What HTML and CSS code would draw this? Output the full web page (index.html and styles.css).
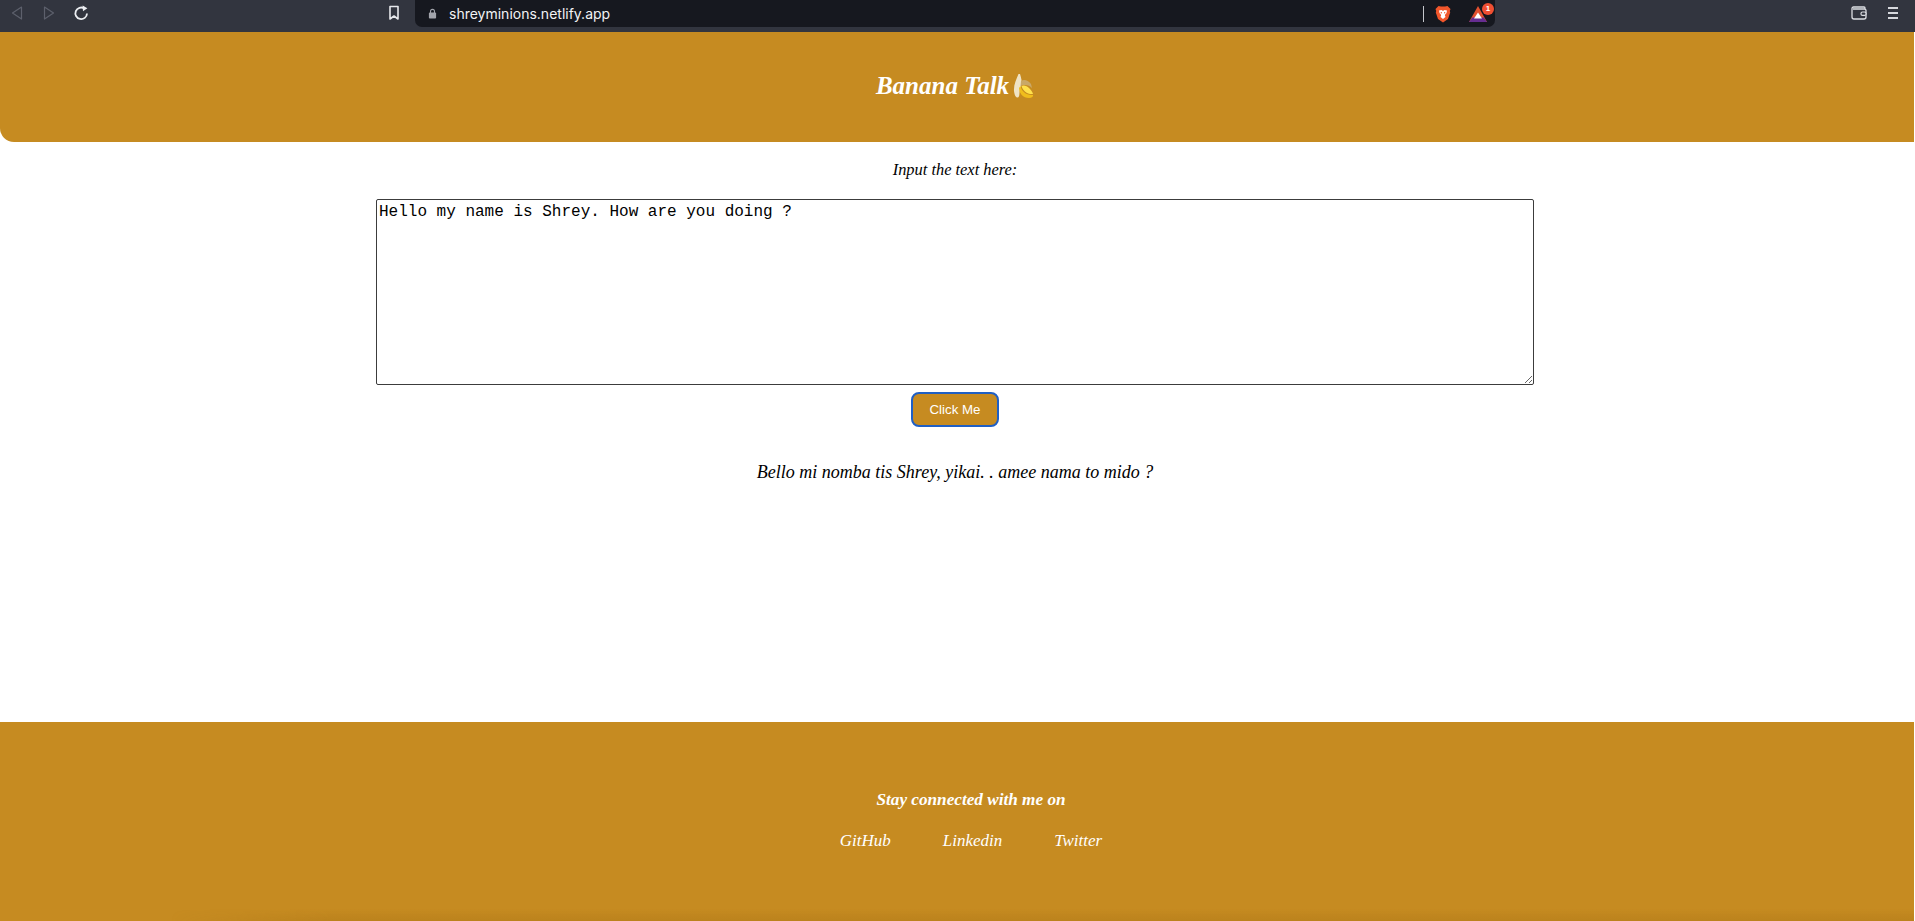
FILE: index.html
```html
<!DOCTYPE html>
<html lang="en">
<head>
<meta charset="utf-8">
<title>Banana Talk</title>
<link rel="stylesheet" href="styles.css">
</head>
<body>
<div class="window">
  <div class="browser-bar">
    <div class="nav-buttons">
      <svg class="nav-icon" viewBox="0 0 16 16"><path d="M12.500 2 L3.500 8 L12.500 14 Z" fill="none" stroke="#5d606c" stroke-width="1.2" stroke-linejoin="round"/></svg>
      <svg class="nav-icon" viewBox="0 0 16 16"><path d="M3.500 2 L12.500 8 L3.500 14 Z" fill="none" stroke="#5d606c" stroke-width="1.2" stroke-linejoin="round"/></svg>
      <svg class="nav-icon" viewBox="0 0 16 16"><path d="M14 8.500 A5.800 5.800 0 1 1 11.300 3.400" fill="none" stroke="#eceef2" stroke-width="1.8"/><path d="M9.600 0.500 L14.400 3.200 L10 6.300 Z" fill="#eceef2"/></svg>
    </div>
    <svg class="bookmark" viewBox="0 0 12 16"><path d="M2 1.500 H10 V14 L6 11 L2 14 Z" fill="none" stroke="#e6e8ec" stroke-width="1.600" stroke-linejoin="round"/></svg>
    <div class="address-bar">
      <svg class="lock" viewBox="0 0 10 12"><path d="M2.800 5.500 V3.600 A2.200 2.200 0 0 1 7.200 3.600 V5.500" fill="none" stroke="#a2a4ab" stroke-width="1.200"/><rect x="1" y="5" width="8" height="6.500" rx="1" fill="#a2a4ab"/></svg>
      <span class="url">shreyminions.netlify.app</span>
      <span class="address-divider"></span>
      <svg class="brave" viewBox="0 0 16 18"><path d="M3.500 1 L6 1.600 H10 L12.500 1 L15.500 4 L14.800 6 L15.200 7.500 L13 14 L8 17.500 L3 14 L0.800 7.500 L1.200 6 L0.500 4 Z" fill="#f1562b"/><path d="M4 5.500 L6.500 5 L8 6 L9.500 5 L12 5.500 L11.500 8 L9.800 10 L10.500 12 L8 14 L5.500 12 L6.200 10 L4.500 8 Z" fill="#fff"/><circle cx="6.300" cy="7.800" r=".7" fill="#f1562b"/><circle cx="9.700" cy="7.800" r=".7" fill="#f1562b"/></svg>
      <span class="bat">
        <svg class="bat-icon" viewBox="0 0 18 16"><path d="M9 0 L18 16 H0 Z" fill="#e2502f"/><path d="M0 16 L3.200 11.600 H14.800 L18 16 Z" fill="#662d91"/><path d="M5 12.600 L9 6.500 L13 12.600 Z" fill="#fff"/></svg>
        <span class="bat-badge">1</span>
      </span>
    </div>
    <div class="bar-right">
      <svg class="wallet" viewBox="0 0 16 14"><path d="M14 3 V2 A1 1 0 0 0 13 1 H2.500 A1.500 1.500 0 0 0 1 2.500 V11 A2 2 0 0 0 3 13 H13 A2 2 0 0 0 15 11 V4.500 A1.500 1.500 0 0 0 13.500 3 H2" fill="none" stroke="#dcdee3" stroke-width="1.300"/><rect x="10" y="6" width="5" height="3.400" rx="1.500" fill="#32353f" stroke="#dcdee3" stroke-width="1.200"/></svg>
      <div class="menu"><span></span><span></span><span></span></div>
    </div>
  </div>

  <header class="site-header">
    <h1 class="title">Banana Talk<svg class="banana" viewBox="0 0 22 26"><path d="M6.500 1 C5 5 1.500 11 2 18 C2.400 22 4 25 6 24.500 C8 23.500 7 20 8 17 C9 13 9.500 10 9.500 7 C9.300 5 8.500 3 8 1 Z" fill="#efe3c4"/><path d="M9 8 C12 6 16 7 19 11 L20 15 C17 12 13 11 8.500 13 Z" fill="#c9a868"/><path d="M8.500 13 C9.500 18 14 22.500 21 22 C21.500 23.500 20 25 17 25 C11 25 7 20 7 15 Z" fill="#f0bd1c"/><path d="M9.500 13 C12 11.500 15 13 17 15 C19 17 20.500 19 21 21 C15 21.500 11 18 9.500 13 Z" fill="#ffe14d"/></svg></h1>
  </header>

  <main class="content">
    <label class="input-label" for="text">Input the text here:</label>
    <textarea class="text-input" id="text">Hello my name is Shrey. How are you doing ?</textarea>
    <button class="click-button" type="button">Click Me</button>
    <p class="output">Bello mi nomba tis Shrey, yikai. . amee nama to mido ?</p>
  </main>

  <footer class="site-footer">
    <p class="footer-title">Stay connected with me on</p>
    <ul class="links">
      <li><a class="link" href="#">GitHub</a></li>
      <li><a class="link" href="#">Linkedin</a></li>
      <li><a class="link" href="#">Twitter</a></li>
    </ul>
    <div class="footer-shadow"></div>
  </footer>
</div>
</body>
</html>
```

FILE: styles.css
```css
* {
  box-sizing: border-box;
}

html,
body {
  margin: 0;
  height: 100%;
  background: #ffffff;
  overflow: hidden;
}

.window {
  display: flex;
  flex-direction: column;
  height: 921px;
  width: 1915px;
  padding-right: 1px;
  background: #fff;
  font-family: "Liberation Serif", serif;
  font-style: italic;
}

/* browser chrome */
.browser-bar {
  height: 32px;
  flex: none;
  margin-right: -1px;
  background: #32353f;
  display: flex;
  align-items: flex-start;
  font-style: normal;
}

.nav-buttons {
  display: flex;
  gap: 16px;
  padding: 5px 0 0 9px;
  width: 388px;
  flex: none;
}

.nav-icon {
  width: 16px;
  height: 16px;
}

.bookmark {
  width: 12px;
  height: 16px;
  margin-top: 5px;
  flex: none;
}

.address-bar {
  width: 1080px;
  height: 27px;
  margin-left: 15px;
  flex: none;
  background: #16181f;
  border-radius: 0 0 7px 7px;
  display: flex;
  align-items: center;
  padding-left: 13px;
}

.lock {
  width: 9px;
  height: 11px;
  margin-right: 12px;
}

.url {
  font-family: "Inter", "Liberation Sans", sans-serif;
  font-size: 14px;
  color: #f2f3f5;
  width: 970px;
  flex: none;
}

.address-divider {
  width: 1px;
  height: 16px;
  background: #c4c6cb;
  margin-left: 4px;
  flex: none;
}

.brave {
  width: 16px;
  height: 18px;
  margin-left: 11px;
  flex: none;
}

.bat {
  position: relative;
  width: 18px;
  height: 16px;
  margin-left: 18px;
  flex: none;
}

.bat-icon {
  width: 18px;
  height: 16px;
  display: block;
}

.bat-badge {
  position: absolute;
  top: -3px;
  right: -7px;
  width: 12px;
  height: 12px;
  border-radius: 50%;
  background: #ef4f32;
  color: #fff;
  font: 700 8px/12px "Liberation Sans", sans-serif;
  text-align: center;
}

.bar-right {
  flex: 1;
  display: flex;
  justify-content: flex-end;
  gap: 21px;
  padding: 6px 17px 0 0;
}

.wallet {
  width: 16px;
  height: 14px;
}

.menu {
  width: 10px;
  display: flex;
  flex-direction: column;
  gap: 3px;
  padding-top: 1px;
}

.menu span {
  height: 2px;
  background: #d6d8dd;
}

/* page */
.site-header {
  height: 110px;
  flex: none;
  background: #c68b21;
  border-bottom-left-radius: 14px;
  display: flex;
  align-items: center;
  justify-content: center;
  padding: 0 4px 0 0;
}

.title {
  margin: 0;
  display: flex;
  align-items: center;
  color: #fff;
  font-size: 25px;
  font-weight: 700;
  font-style: italic;
  line-height: 30px;
  position: relative;
  top: -1px;
}

.banana {
  width: 22px;
  height: 26px;
  margin-left: 3px;
}

.content {
  flex: 1;
  display: flex;
  flex-direction: column;
  align-items: center;
  padding: 17px 4px 0 0;
}

.input-label {
  font-size: 16.400px;
  line-height: 22px;
  color: #000;
}

.text-input {
  display: block;
  width: 1158px;
  height: 186px;
  margin-top: 18px;
  padding: 3px 2px 2px;
  border: 1px solid #3c3c3c;
  border-radius: 2px;
  background: #fff;
  color: #000;
  font: 400 16px/18px "Liberation Mono", monospace;
  font-style: normal;
  outline: none;
}

.click-button {
  width: 88px;
  height: 35px;
  margin-top: 7px;
  border: 2px solid #1f5fc4;
  border-radius: 8px;
  background: #c68b21;
  color: #fff;
  font: 400 13.300px "Liberation Sans", Arial, sans-serif;
  padding: 0;
}

.output {
  margin: 32px 0 0;
  font-size: 18px;
  line-height: 26px;
  color: #000;
}

.site-footer {
  position: relative;
  height: 199px;
  flex: none;
  background: #c68b21;
  display: flex;
  flex-direction: column;
  align-items: center;
  padding: 66px 0 0 28px;
}

.footer-title {
  margin: 0;
  font-size: 17.200px;
  line-height: 24px;
  font-weight: 700;
  color: #fff;
}

.links {
  list-style: none;
  margin: 17px 0 0;
  padding: 0;
  display: flex;
  gap: 52px;
}

.link {
  font-size: 17px;
  line-height: 24px;
  color: #fff;
  text-decoration: none;
}

.footer-shadow {
  position: absolute;
  left: 170px;
  right: 0;
  bottom: 0;
  height: 12px;
  background: linear-gradient(to bottom, rgba(150, 100, 15, 0), rgba(150, 100, 15, 0.22));
  mask-image: linear-gradient(to right, transparent, #000 160px);
}
```
